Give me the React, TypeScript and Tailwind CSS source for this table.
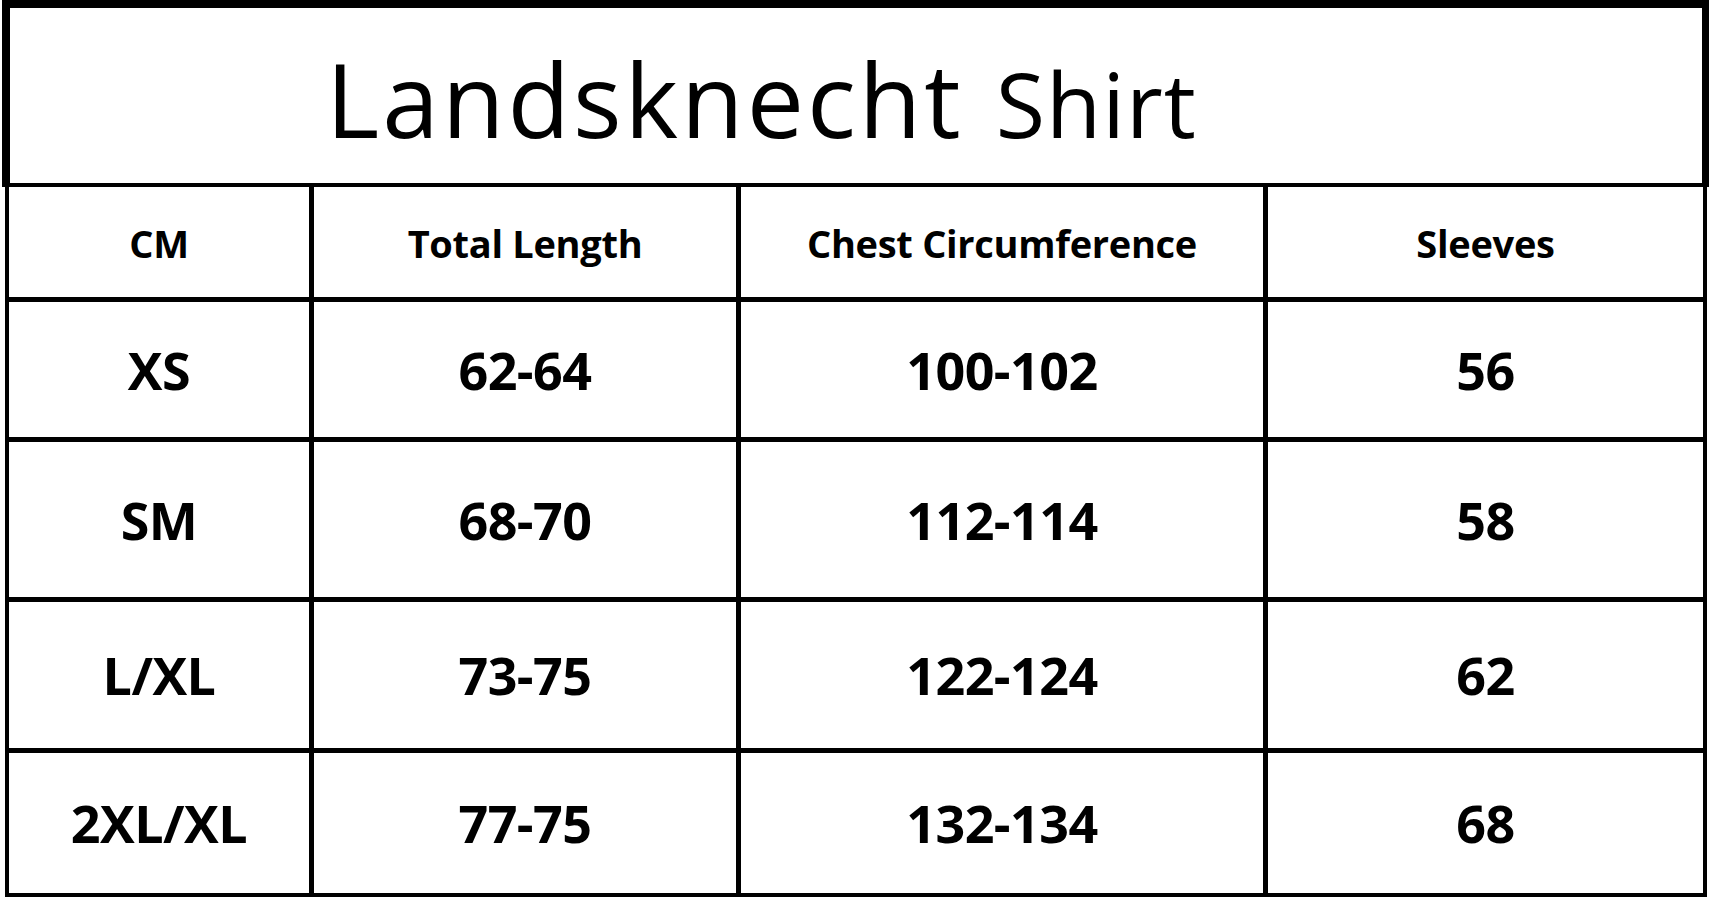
import React from "react";

const rows = [
  ["XS", "62-64", "100-102", "56"],
  ["SM", "68-70", "112-114", "58"],
  ["L/XL", "73-75", "122-124", "62"],
  ["2XL/XL", "77-75", "132-134", "68"],
];
const rowH = ["h-[135px]", "h-[155px]", "h-[146px]", "h-[140px]"];

export default function App() {
  return (
    <div
      className="w-[1712px] h-[902px] bg-white text-black"
      style={{ fontFamily: '"Open Sans", "Liberation Sans", sans-serif' }}
    >
      <div className="ml-[2px] w-[1707px] h-[187px] border-t-8 border-l-8 border-r-[7px] border-b-4 border-black flex items-baseline pl-[316px] pt-[40px]">
        <span className="text-[102px] leading-none tracking-[3px]">Landsknecht</span>
        <span className="text-[90px] leading-none tracking-[1px] ml-[32px]">Shirt</span>
      </div>
      <div className="ml-[5px] w-[1702px] bg-black px-[4px] pb-[4px]">
        <div className="grid grid-cols-[300px_422px_522px_435px] gap-x-[5px] gap-y-[5px]">
          {["CM", "Total Length", "Chest Circumference", "Sleeves"].map((h) => (
            <div key={h} className="bg-white h-[110px] flex items-center justify-center text-[38px] font-bold pt-[3px] tracking-[-0.3px]">
              {h}
            </div>
          ))}
          {rows.map((r, i) =>
            r.map((c, j) => (
              <div
                key={i + "-" + j}
                className={`bg-white ${rowH[i]} flex items-center justify-center text-[52px] font-bold tracking-[-0.5px]`}
              >
                {c}
              </div>
            ))
          )}
        </div>
      </div>
    </div>
  );
}
